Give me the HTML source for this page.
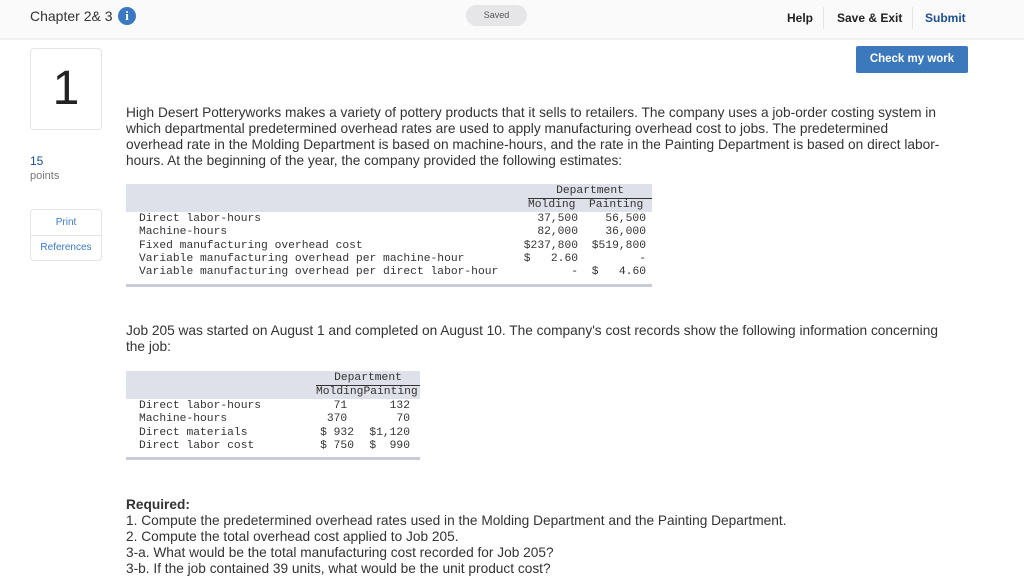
<!DOCTYPE html>
<html><head><style>
body{margin:0;width:1024px;height:587px;background:#fff;font-family:"Liberation Sans",sans-serif;color:#222;position:relative;overflow:hidden}
.a{position:absolute;white-space:nowrap}
.top{position:absolute;left:0;top:0;width:1024px;height:38px;background:#fafafa;border-bottom:2px solid #f0f0f0}
.p{font-size:13.7px;line-height:16px;color:#333}
.m{font-family:"Liberation Mono",monospace;font-size:11.3px;line-height:13.3px;color:#333}
</style></head><body>
<div class="top"></div>
<div class="a" style="left:30px;top:8px;font-size:14px;color:#333">Chapter 2&amp; 3</div>
<div class="a" style="left:118px;top:7px;width:18px;height:18px;border-radius:50%;background:#3a78c2;color:#fff;font-weight:bold;font-size:13px;text-align:center;line-height:18px;font-family:'Liberation Serif',serif">i</div>
<div class="a" style="left:466px;top:5px;width:61px;height:21px;border-radius:11px;background:#e6e6e8;font-size:9px;color:#555;text-align:center;line-height:21px">Saved</div>
<div class="a" style="left:787px;top:11px;font-size:12px;font-weight:bold;color:#222">Help</div>
<div class="a" style="left:823px;top:7px;width:1px;height:22px;background:#e6e6e6"></div>
<div class="a" style="left:837px;top:11px;font-size:12px;font-weight:bold;color:#222">Save &amp; Exit</div>
<div class="a" style="left:912px;top:7px;width:1px;height:22px;background:#e6e6e6"></div>
<div class="a" style="left:925px;top:11px;font-size:12px;font-weight:bold;color:#1c4f8e">Submit</div>
<div class="a" style="left:856px;top:46px;width:112px;height:27px;background:#3b78bc;border-radius:2px;color:#fff;font-size:11.5px;font-weight:bold;text-align:center;line-height:27px">Check my work</div>
<div class="a" style="left:30px;top:48px;width:70px;height:80px;border:1px solid #e4e4e4;border-radius:4px;text-align:center;font-size:48px;line-height:80px;color:#222">1</div>
<div class="a" style="left:30px;top:154px;font-size:12px;color:#1c4f8e">15</div>
<div class="a" style="left:30px;top:170px;font-size:11px;color:#777">points</div>
<div class="a" style="left:30px;top:209px;width:70px;height:50px;border:1px solid #e4e4e4;border-radius:4px"></div>
<div class="a" style="left:31px;top:235px;width:70px;height:1px;background:#e4e4e4"></div>
<div class="a" style="left:30px;top:217px;width:72px;text-align:center;font-size:10px;color:#3a78c2">Print</div>
<div class="a" style="left:30px;top:242px;width:72px;text-align:center;font-size:10px;color:#3a78c2">References</div>

<div class="a p" style="left:126px;top:105px">High Desert Potteryworks makes a variety of pottery products that it sells to retailers. The company uses a job-order costing system in<br>which departmental predetermined overhead rates are used to apply manufacturing overhead cost to jobs. The predetermined<br>overhead rate in the Molding Department is based on machine-hours, and the rate in the Painting Department is based on direct labor-<br>hours. At the beginning of the year, the company provided the following estimates:</div>

<div class="a" style="left:126px;top:184px;width:526px;height:28px;background:#dfe1ea"></div>
<div class="a m" style="left:528px;top:185px;width:124px;text-align:center">Department</div>
<div class="a" style="left:528px;top:198px;width:124px;height:1px;background:#333"></div>
<div class="a m" style="left:528px;top:199px">Molding&nbsp;&nbsp;Painting</div>
<div class="a m" style="left:139px;top:213px">Direct labor-hours<br>Machine-hours<br>Fixed manufacturing overhead cost<br>Variable manufacturing overhead per machine-hour<br>Variable manufacturing overhead per direct labor-hour</div>
<div class="a m" style="left:522px;top:213px;width:56px;text-align:right">37,500<br>82,000<br>$237,800<br>$&nbsp;&nbsp;&nbsp;2.60<br>-</div>
<div class="a m" style="left:584px;top:213px;width:62px;text-align:right">56,500<br>36,000<br>$519,800<br>-<br>$&nbsp;&nbsp;&nbsp;4.60</div>
<div class="a" style="left:126px;top:284px;width:526px;height:3px;background:#c9ccd6"></div>

<div class="a p" style="left:126px;top:323px">Job 205 was started on August 1 and completed on August 10. The company's cost records show the following information concerning<br>the job:</div>

<div class="a" style="left:126px;top:371px;width:294px;height:28px;background:#dfe1ea"></div>
<div class="a m" style="left:316px;top:372px;width:104px;text-align:center">Department</div>
<div class="a" style="left:316px;top:385px;width:104px;height:1px;background:#333"></div>
<div class="a m" style="left:316px;top:386px">MoldingPainting</div>
<div class="a m" style="left:139px;top:400px">Direct labor-hours<br>Machine-hours<br>Direct materials<br>Direct labor cost</div>
<div class="a m" style="left:316px;top:400px;width:38px;text-align:right">71&nbsp;<br>370&nbsp;<br>$ 932<br>$ 750</div>
<div class="a m" style="left:366px;top:400px;width:44px;text-align:right">132<br>70<br>$1,120<br>$&nbsp;&nbsp;990</div>
<div class="a" style="left:126px;top:457px;width:294px;height:3px;background:#c9ccd6"></div>

<div class="a p" style="left:126px;top:497px"><b>Required:</b><br>1. Compute the predetermined overhead rates used in the Molding Department and the Painting Department.<br>2. Compute the total overhead cost applied to Job 205.<br>3-a. What would be the total manufacturing cost recorded for Job 205?<br>3-b. If the job contained 39 units, what would be the unit product cost?</div>
</body></html>
